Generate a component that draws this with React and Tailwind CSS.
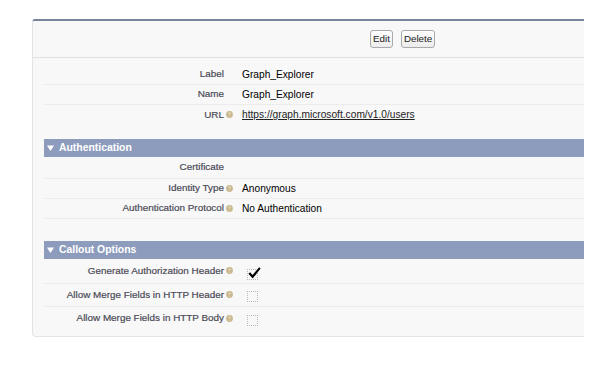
import React from "react";

function Help() {
  return (
    <svg width="7" height="7" viewBox="0 0 7 7" className="ml-[2px] mr-[-9px] shrink-0">
      <circle cx="3.5" cy="3.5" r="3.4" fill="#c9b88e" />
      <path d="M2.5 2.6 Q2.6 1.6 3.5 1.6 Q4.5 1.6 4.5 2.5 Q4.5 3.1 3.6 3.5 L3.6 4.2" stroke="#f3ecd9" strokeWidth="0.8" fill="none" />
      <circle cx="3.6" cy="5.3" r="0.45" fill="#f3ecd9" />
    </svg>
  );
}

function Row({ label, help, children, h = "h-[20px]", border = true }) {
  return (
    <div className={`flex items-center ${h} ${border ? "border-b border-[#ececec]" : ""}`}>
      <div className="w-[188px] shrink-0 flex items-center justify-end pr-[8px] text-[9.9px] text-[#4a4a56] [-webkit-text-stroke:0.2px_#4a4a56]">
        <span>{label}</span>
        {help && <Help />}
      </div>
      <div className="pl-[10px] text-[10.2px] text-black flex items-center">{children}</div>
    </div>
  );
}

function SectionHeader({ title }) {
  return (
    <div className="h-[18px] bg-[#8d9cbc] flex items-center text-white font-bold text-[10.4px]">
      <svg width="7" height="6" viewBox="0 0 7 6" className="ml-[3px] mr-[5px]">
        <path d="M0 0.5 H7 L3.5 6 Z" fill="#ffffff" />
      </svg>
      <span>{title}</span>
    </div>
  );
}

function Checkbox({ checked, mt = "mt-[6px]" }) {
  return (
    <div className={`relative ml-[5px] ${mt} w-[11px] h-[11px] border border-dotted border-[#b9b9b9]`}>
      {checked && (
        <svg width="13" height="12" viewBox="0 0 13 12" className="absolute left-[0px] top-[-3px]">
          <path d="M0.4 6.8 L2.1 5.2 L4.5 7.9 L11.2 0.2 L12.6 1.4 L4.7 11.6 Z" fill="#000" />
        </svg>
      )}
    </div>
  );
}

function Btn({ children }) {
  return (
    <button className="h-[18px] px-[2px] border border-[#a9a9a9] rounded-[3px] bg-gradient-to-b from-white to-[#ececec] text-[9.8px] text-[#222] leading-none">
      {children}
    </button>
  );
}

export default function App() {
  return (
    <div className="w-[613px] h-[366px] bg-white pt-[19px] pl-[32px] font-['Liberation_Sans',Arial,sans-serif]">
      <div className="w-[552px] bg-[#f8f8f8] border-t-[2px] border-t-[#78839c] border-l border-l-[#e4e4e4] border-b border-b-[#e4e4e4] rounded-tl-[3px] rounded-bl-[4px] pb-[6px]">
        <div className="h-[37px] flex items-center gap-[8px] pl-[337px] border-b border-[#e0e0e0]">
          <Btn>Edit</Btn>
          <Btn>Delete</Btn>
        </div>
        <div className="ml-[11px] pt-[7px]">
          <Row label="Label">Graph_Explorer</Row>
          <Row label="Name">Graph_Explorer</Row>
          <Row label="URL" help border={false}>
            <span className="underline text-[#222]">https://graph.microsoft.com/v1.0/users</span>
          </Row>

          <div className="mt-[14px]">
            <SectionHeader title="Authentication" />
          </div>
          <Row label="Certificate" h="h-[22px]"></Row>
          <Row label="Identity Type" help>Anonymous</Row>
          <Row label="Authentication Protocol" help>No Authentication</Row>

          <div className="mt-[22px]">
            <SectionHeader title="Callout Options" />
          </div>
          <Row label="Generate Authorization Header" help h="h-[25px]">
            <Checkbox checked mt="mt-[6px]" />
          </Row>
          <Row label="Allow Merge Fields in HTTP Header" help h="h-[23px]">
            <Checkbox mt="mt-[3px]" />
          </Row>
          <Row label="Allow Merge Fields in HTTP Body" help h="h-[23px]" border={false}>
            <Checkbox mt="mt-[3px]" />
          </Row>
        </div>
      </div>
    </div>
  );
}
